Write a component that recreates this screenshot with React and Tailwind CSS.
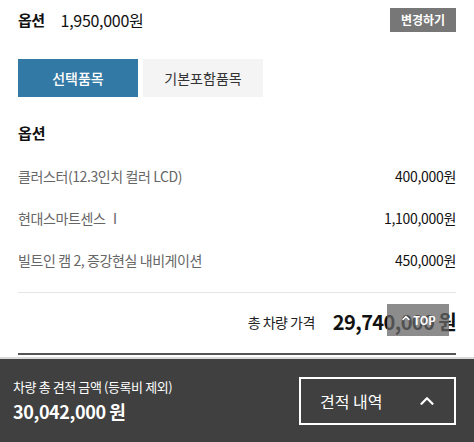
import { ChevronUp } from "lucide-react";

const options = [
  { name: "클러스터(12.3인치 컬러 LCD)", price: "400,000원" },
  { name: "현대스마트센스 Ⅰ", price: "1,100,000원" },
  { name: "빌트인 캠 2, 증강현실 내비게이션", price: "450,000원" },
];

const App = () => {
  return (
    <div
      className="relative w-[474px] h-[442px] overflow-hidden bg-white text-[#111]"
      style={{ fontFamily: '"Noto Sans CJK KR", "Noto Sans", sans-serif' }}
    >
      <div className="px-[18px]">
        <div className="flex items-center justify-between pt-[8px] h-[32px]">
          <div className="flex items-center gap-[16px]">
            <span className="text-[15px] font-bold tracking-[-0.5px]">옵션</span>
            <span className="text-[16px] tracking-[-0.3px]">1,950,000원</span>
          </div>
          <button className="w-[66px] h-[24px] bg-[#777] text-white text-[12px] font-bold">
            변경하기
          </button>
        </div>

        <div className="flex gap-[5px] mt-[27px]">
          <button className="w-[120px] h-[38px] bg-[#3379a5] text-white text-[14px] font-medium">
            선택품목
          </button>
          <button className="w-[120px] h-[38px] bg-[#f4f4f4] text-[#333] text-[14px]">
            기본포함품목
          </button>
        </div>

        <div className="mt-[24px] h-[24px] flex items-center text-[15px] font-bold">옵션</div>

        <div className="mt-[19px] flex flex-col gap-[18px]">
          {options.map((o) => (
            <div key={o.name} className="flex items-center justify-between h-[24px] text-[14px]">
              <span className="text-[#666] tracking-[-0.4px]">{o.name}</span>
              <span className="text-[#111] tracking-[-0.3px]">{o.price}</span>
            </div>
          ))}
        </div>

        <div className="mt-[20px] border-t border-[#e6e6e6]" />

        <div className="flex items-center justify-end h-[58px] gap-[18px]">
          <span className="text-[14px] text-[#222] tracking-[-0.5px]">총 차량 가격</span>
          <span className="text-[20px] font-bold tracking-[-0.6px]">29,740,000 원</span>
        </div>

        <div className="mt-[2px] border-t-2 border-[#555]" />
      </div>

      <div className="absolute left-[387px] top-[304px] w-[62px] h-[32px] bg-[#666]/75 flex items-center justify-center text-white text-[11px] font-bold">
        <ChevronUp size={12} strokeWidth={3} className="-mt-[4px] mr-[1px]" />
        TOP
      </div>

      <div className="absolute left-0 right-0 bottom-0 h-[85px] bg-[#404040] border-t-2 border-[#d9d9d9] flex items-center justify-between pl-[13px] pr-[18px]">
        <div className="flex flex-col">
          <span className="text-white text-[13px] tracking-[-0.4px] leading-[20px]">
            차량 총 견적 금액 (등록비 제외)
          </span>
          <span className="text-white text-[18px] font-bold tracking-[-0.4px] leading-[28px]">
            30,042,000 원
          </span>
        </div>
        <button className="w-[157px] h-[48px] border-2 border-white flex items-center justify-between pl-[19px] pr-[16px] text-white text-[16px]">
          견적 내역
          <ChevronUp size={22} strokeWidth={2.5} />
        </button>
      </div>
    </div>
  );
};

export default App;
